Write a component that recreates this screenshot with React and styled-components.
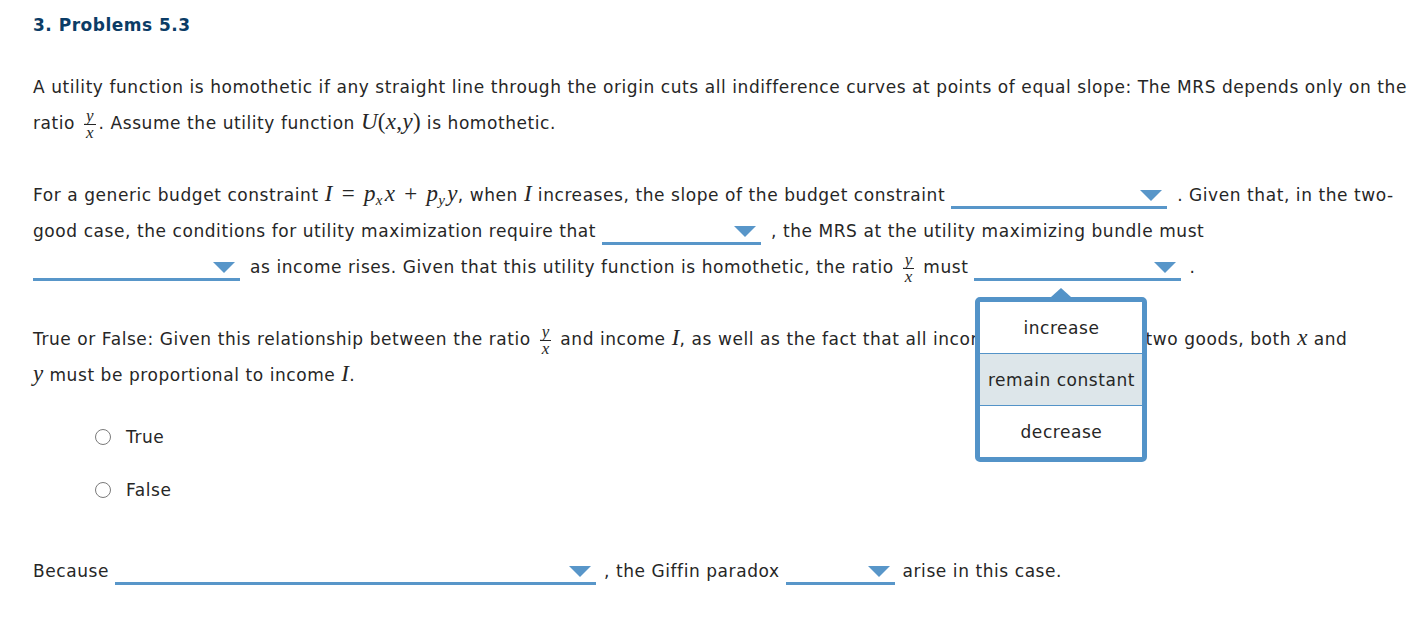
import React from 'react';
import styled, {createGlobalStyle} from 'styled-components';

const GlobalStyle = createGlobalStyle`
  body {
    margin: 0;
    background: #fff;
    font-family: "DejaVu Sans", Verdana, sans-serif;
    color: #262626;
  }
`;

const Page = styled.div`
  padding: 10px 0 20px 33px;
  font-size: 17px;
  letter-spacing: 0.57px;
`;

const Title = styled.h2`
  margin: 0;
  font-size: 17px;
  font-weight: bold;
  letter-spacing: 0.5px;
  color: #0b3c66;
  line-height: 30px;
`;

const Para = styled.p`
  margin: ${props => props.top}px 0 0 0;
  line-height: 36px;
  white-space: nowrap;
`;

const M = styled.span`
  font-family: "Liberation Serif", "Times New Roman", serif;
  font-style: ${props => props.upright ? 'normal' : 'italic'};
  font-size: 23px;
  line-height: 1;
  letter-spacing: 0.3px;
`;

const Op = styled(M)`
  font-style: normal;
  margin: 0 9px;
`;

const Sub = styled.sub`
  font-size: 15px;
  line-height: 0;
  vertical-align: -4px;
  margin-right: 2px;
`;

const Frac = styled.span`
  display: inline-flex;
  flex-direction: column;
  align-items: center;
  vertical-align: middle;
  margin: 0 3px;
  font-family: "Liberation Serif", "Times New Roman", serif;
  font-style: italic;
  font-size: 17px;
  line-height: 13px;
  letter-spacing: 0;
`;

const Num = styled.span`
  padding: 0 2px 2px;
  border-bottom: 1px solid #262626;
`;

const Den = styled.span`
  padding-top: 1px;
`;

const Blank = styled.span`
  position: relative;
  display: inline-block;
  width: ${props => props.w}px;
  height: 22px;
  margin: 0 ${props => props.gap}px 0 0;
  vertical-align: -8px;
  border-bottom: 3px solid #5896c9;
`;

const Caret = styled.span`
  position: absolute;
  right: 5px;
  top: 6px;
  width: 0;
  height: 0;
  border-left: 11px solid transparent;
  border-right: 11px solid transparent;
  border-top: 11px solid #5896c9;
`;

const Popup = styled.div`
  position: absolute;
  left: 1px;
  top: 41px;
  width: 172px;
  box-sizing: border-box;
  border: 5px solid #5393c8;
  border-radius: 5px;
  background: #fff;
  z-index: 5;
  line-height: normal;
  letter-spacing: 0.55px;

  &::before {
    content: '';
    position: absolute;
    left: 71px;
    top: -14px;
    border-left: 10px solid transparent;
    border-right: 10px solid transparent;
    border-bottom: 9px solid #5393c8;
  }
`;

const Option = styled.div`
  height: ${props => props.first ? 51 : 52}px;
  display: flex;
  align-items: center;
  justify-content: center;
  box-sizing: border-box;
  background: ${props => props.active ? '#dde6ea' : '#fff'};
  border-top: ${props => props.first ? 'none' : '1px solid #5393c8'};
  font-size: 17px;
  color: #262626;
`;

const Choices = styled.div`
  margin: 32px 0 0 62px;
  display: flex;
  flex-direction: column;
  gap: 29px;
`;

const Choice = styled.label`
  display: flex;
  align-items: center;
  gap: 15px;
  line-height: 24px;
`;

const Radio = styled.span`
  width: 16px;
  height: 16px;
  border: 1.5px solid #7a7a7a;
  border-radius: 50%;
  box-sizing: border-box;
`;

const Frac2 = () => (
  <Frac>
    <Num>y</Num>
    <Den>x</Den>
  </Frac>
);

const Dropdown = ({w, gap = 8, open}) => (
  <Blank w={w} gap={gap}>
    <Caret/>
    {open && (
      <Popup>
        <Option first>increase</Option>
        <Option active>remain constant</Option>
        <Option>decrease</Option>
      </Popup>
    )}
  </Blank>
);

export default function App() {
  return (
    <Page>
      <GlobalStyle/>
      <Title>3. Problems 5.3</Title>

      <Para top={29}>
        A utility function is homothetic if any straight line through the origin cuts all indifference curves at points of equal slope: The MRS depends only on the<br/>
        ratio <Frac2/>. Assume the utility function <M>U</M><M upright>(</M><M>x</M><M upright>,</M><M>y</M><M upright>)</M> is homothetic.
      </Para>

      <Para top={36}>
        For a generic budget constraint <M>I</M><Op>=</Op><M>p<Sub>x</Sub>x</M><Op>+</Op><M>p<Sub>y</Sub>y</M>, when <M>I</M> increases, the slope of the budget constraint <Dropdown w={216} gap={10}/>. Given that, in the two-<br/>
        good case, the conditions for utility maximization require that <Dropdown w={159} gap={10}/>, the MRS at the utility maximizing bundle must<br/>
        <Dropdown w={207} gap={10}/>as income rises. Given that this utility function is homothetic, the ratio <Frac2/> must <Dropdown w={207} open/>.
      </Para>

      <Para top={36}>
        True or False: Given this relationship between the ratio <Frac2/> and income <M>I</M>, as well as the fact that all income is spent on the two goods, both <M>x</M> and<br/>
        <M>y</M> must be proportional to income <M>I</M>.
      </Para>

      <Choices>
        <Choice><Radio/>True</Choice>
        <Choice><Radio/>False</Choice>
      </Choices>

      <Para top={51}>
        Because <Dropdown w={481}/>, the Giffin paradox <Dropdown w={109}/>arise in this case.
      </Para>
    </Page>
  );
}
